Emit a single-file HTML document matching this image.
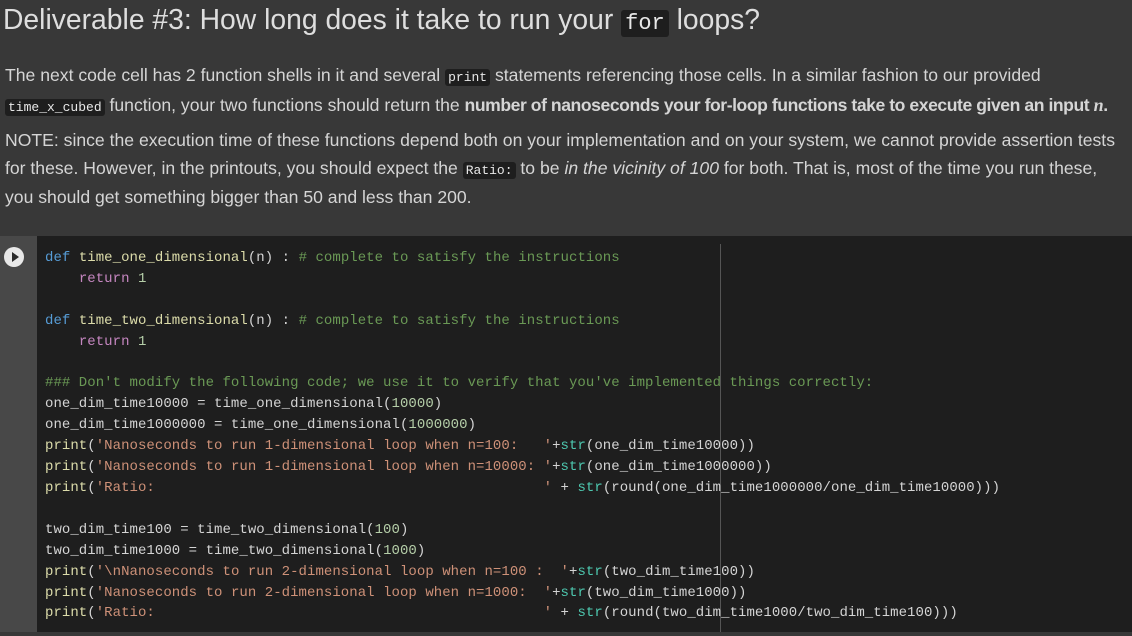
<!DOCTYPE html>
<html><head><meta charset="utf-8">
<style>
html,body{margin:0;padding:0;width:1132px;height:636px;overflow:hidden;background:#383838;}
body{font-family:"Liberation Sans",Arial,sans-serif;color:#d5d5d5;position:relative;}
h1{position:absolute;left:3px;top:3px;margin:0;font-weight:normal;font-size:28.3px;letter-spacing:0px;color:#dedede;white-space:nowrap;}
code.i{font-family:"Liberation Mono",monospace;background:#1e1e1e;border-radius:3px;padding:1px 4px;color:#e8e8e8;}
h1 code.i{font-size:22px;padding:1px 4px;}
p{position:absolute;left:5px;margin:0;font-size:17.6px;line-height:27.5px;letter-spacing:0;white-space:nowrap;}
p b{letter-spacing:-0.45px;}
p code.i{font-size:13px;padding:1px 3px;letter-spacing:0;}
.cell{position:absolute;left:0;top:236px;width:1132px;height:396px;background:#1e1e1e;}
.gut{position:absolute;left:0;top:0;width:37px;height:396px;background:#484848;}
.play{position:absolute;left:4px;top:11px;width:20px;height:20px;border-radius:50%;background:#e8e8e8;}
.play:after{content:"";position:absolute;left:8px;top:5px;border-left:7px solid #2a2a2a;border-top:5px solid transparent;border-bottom:5px solid transparent;}
.ruler{position:absolute;left:720px;top:8px;width:1px;height:388px;background:#555;}
pre{position:absolute;left:45px;top:12px;margin:0;font-family:"Liberation Mono",monospace;font-size:14px;letter-spacing:0.05px;line-height:20.9px;color:#d4d4d4;}
.k{color:#569cd6}.r{color:#c586c0}.n{color:#b5cea8}.c{color:#6a9955}.s{color:#ce9178}.f{color:#dcdcaa}.b{color:#4ec9b0}
</style></head><body>
<h1>Deliverable #3: How long does it take to run your <code class="i">for</code> loops?</h1>
<p style="top:62px">The next code cell has 2 function shells in it and several <code class="i">print</code> statements referencing those cells. In a similar fashion to our provided<br><code class="i">time_x_cubed</code> function, your two functions should return the <b>number of nanoseconds your for-loop functions take to execute given an input <i style="font-family:'Liberation Serif',serif;font-size:18px">n</i>.</b></p>
<p style="top:127px">NOTE: since the execution time of these functions depend both on your implementation and on your system, we cannot provide assertion tests<br>for these. However, in the printouts, you should expect the <code class="i">Ratio:</code> to be <i>in the vicinity of 100</i> for both. That is, most of the time you run these,<br>you should get something bigger than 50 and less than 200.</p>
<div class="cell"><div class="gut"><div class="play"></div></div><div class="ruler"></div>
<pre><span class="k">def</span> <span class="f">time_one_dimensional</span>(n) : <span class="c"># complete to satisfy the instructions</span>
    <span class="r">return</span> <span class="n">1</span>

<span class="k">def</span> <span class="f">time_two_dimensional</span>(n) : <span class="c"># complete to satisfy the instructions</span>
    <span class="r">return</span> <span class="n">1</span>

<span class="c">### Don't modify the following code; we use it to verify that you've implemented things correctly:</span>
one_dim_time10000 = time_one_dimensional(<span class="n">10000</span>)
one_dim_time1000000 = time_one_dimensional(<span class="n">1000000</span>)
<span class="f">print</span>(<span class="s">'Nanoseconds to run 1-dimensional loop when n=100:   '</span>+<span class="b">str</span>(one_dim_time10000))
<span class="f">print</span>(<span class="s">'Nanoseconds to run 1-dimensional loop when n=10000: '</span>+<span class="b">str</span>(one_dim_time1000000))
<span class="f">print</span>(<span class="s">'Ratio:                                              '</span> + <span class="b">str</span>(round(one_dim_time1000000/one_dim_time10000)))

two_dim_time100 = time_two_dimensional(<span class="n">100</span>)
two_dim_time1000 = time_two_dimensional(<span class="n">1000</span>)
<span class="f">print</span>(<span class="s">'\nNanoseconds to run 2-dimensional loop when n=100 :  '</span>+<span class="b">str</span>(two_dim_time100))
<span class="f">print</span>(<span class="s">'Nanoseconds to run 2-dimensional loop when n=1000:  '</span>+<span class="b">str</span>(two_dim_time1000))
<span class="f">print</span>(<span class="s">'Ratio:                                              '</span> + <span class="b">str</span>(round(two_dim_time1000/two_dim_time100)))</pre>
</div>
</body></html>
